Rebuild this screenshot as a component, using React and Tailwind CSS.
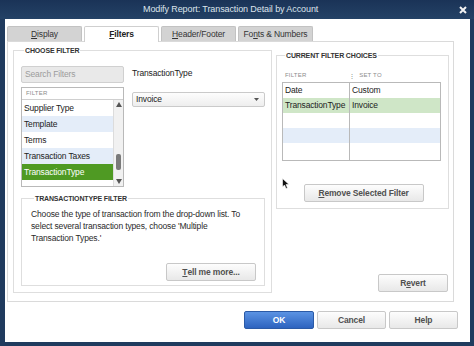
const listRows = [
  { label: 'Supplier Type', tone: '' },
  { label: 'Template', tone: 'bg-[#e4edf9]' },
  { label: 'Terms', tone: '' },
  { label: 'Transaction Taxes', tone: 'bg-[#e4edf9]' },
  { label: 'TransactionType', tone: 'bg-[#4f9a23] text-white' },
];

const choiceRows = [
  { filter: 'Date', value: 'Custom', tone: '' },
  { filter: 'TransactionType', value: 'Invoice', tone: 'bg-[#cfe6c7]' },
  { filter: '', value: '', tone: '' },
  { filter: '', value: '', tone: 'bg-[#e4edf9]' },
  { filter: '', value: '', tone: '' },
];

function Btn({ children, className = '' }) {
  return (
    <div
      className={`flex items-center justify-center h-[18px] border border-[#c8c8c8] rounded-[2px] bg-linear-to-b from-[#fdfdfd] to-[#e8e8e8] text-[8.5px] font-bold text-[#505050] ${className}`}
    >
      {children}
    </div>
  );
}

function Tab({ children, active }) {
  if (active) {
    return (
      <div className="w-[75px] h-[16px] flex items-center justify-center bg-white border border-b-0 border-[#cfcfcf] rounded-t-[2px] text-[8.5px] font-bold text-[#222]">
        {children}
      </div>
    );
  }
  return (
    <div className="w-[75px] h-[15px] flex items-center justify-center bg-[#d3d3d3] border border-b-0 border-[#c2c2c2] rounded-t-[2px] text-[8.5px] text-[#333]">
      {children}
    </div>
  );
}

export default function App() {
  return (
    <div className="w-[474px] h-[346px] flex flex-col bg-[#203b5e] pl-[5px] pr-[4px] pb-[4px] font-['Liberation_Sans',Arial,sans-serif] text-[#222] tracking-[-0.15px]">
      {/* title bar */}
      <div className="h-[19px] -ml-[5px] -mr-[4px] flex items-center bg-linear-to-b from-[#1a3357] to-[#244266] pl-[143px] pr-[7px]">
        <span className="text-[9px] text-[#dde4ec] tracking-[-0.1px]">
          Modify Report: Transaction Detail by Account
        </span>
        <svg className="ml-auto" width="8" height="8" viewBox="0 0 8 8">
          <path d="M1 1L7 7M7 1L1 7" stroke="#f2f2f2" strokeWidth="2" />
        </svg>
      </div>

      <div className="flex-1 bg-white flex flex-col pt-[7px] pl-[2px]">
        {/* tabs */}
        <div className="flex items-start gap-[2px] h-[16px] -mb-px relative z-10">
          <Tab>
            <span className="underline">D</span>isplay
          </Tab>
          <Tab active>
            <span className="underline">F</span>ilters
          </Tab>
          <Tab>
            <span className="underline">H</span>eader/Footer
          </Tab>
          <Tab>
            Fo<span className="underline">n</span>ts &amp; Numbers
          </Tab>
        </div>

        {/* main box */}
        <div className="w-[447px] border border-[#dadada] flex gap-[4px] pl-[5px] pr-[3px] pt-[4px] pb-[8px]">
          {/* choose filter */}
          <fieldset className="w-[259px] border border-[#dedede] pl-[7px] pr-[6px] pb-[6px]">
            <legend className="ml-[3px] px-[1px] text-[7px] leading-[9px] font-bold text-[#333]">
              CHOOSE FILTER
            </legend>
            <div className="flex gap-[8px] pt-[11px]">
              <div className="w-[103px] flex flex-col gap-[4px]">
                <div className="h-[17px] flex items-center pl-[3px] bg-[#e9e9e9] border border-[#d0d0d0] rounded-[2px] text-[8.5px] text-[#9c9c9c]">
                  Search Filters
                </div>
                <div className="h-[100px] border border-[#b9b9b9] flex flex-col">
                  <div className="h-[12px] flex items-center pl-[4px] border-b border-[#cfcfcf] text-[6px] text-[#8c8c8c] tracking-[0.2px]">
                    FILTER
                  </div>
                  <div className="flex-1 flex overflow-hidden">
                    <div className="flex-1 flex flex-col">
                      {listRows.map((r) => (
                        <div
                          key={r.label}
                          className={`h-[16px] shrink-0 flex items-center pl-[2px] text-[8.5px] whitespace-nowrap ${r.tone}`}
                        >
                          {r.label}
                        </div>
                      ))}
                    </div>
                    <div className="w-[10px] bg-[#f1f1f1] border-l border-[#dcdcdc] flex flex-col items-center pt-[2px] pb-[2px]">
                      <svg width="6" height="5" viewBox="0 0 6 5">
                        <path d="M3 0L6 5H0Z" fill="#555" />
                      </svg>
                      <div className="mt-auto mb-[9px] w-[5px] h-[16px] rounded-[2px] bg-[#7a7a7a]" />
                      <svg width="6" height="5" viewBox="0 0 6 5">
                        <path d="M0 0H6L3 5Z" fill="#555" />
                      </svg>
                    </div>
                  </div>
                </div>
              </div>
              <div className="flex-1 flex flex-col">
                <div className="h-[12px] mt-[1px] flex items-center text-[8.5px] text-[#222]">
                  TransactionType
                </div>
                <div className="mt-[13px] h-[15px] flex items-center pl-[3px] pr-[5px] border border-[#cacaca] rounded-[2px] bg-linear-to-b from-[#fdfdfd] to-[#eeeeee] text-[8.5px]">
                  Invoice
                  <svg className="ml-auto" width="5" height="3" viewBox="0 0 5 3">
                    <path d="M0 0H5L2.5 3Z" fill="#555" />
                  </svg>
                </div>
              </div>
            </div>

            {/* transactiontype filter */}
            <fieldset className="mt-[7px] border border-[#dedede] pl-[9px] pr-[8px] pb-[4px]">
              <legend className="ml-[3px] px-[1px] text-[7px] leading-[9px] font-bold text-[#333]">
                TRANSACTIONTYPE FILTER
              </legend>
              <p className="pt-[5px] text-[8.5px] leading-[12px] text-[#2a2a2a] whitespace-nowrap">
                Choose the type of transaction from the drop-down list. To
                <br />
                select several transaction types, choose &apos;Multiple
                <br />
                Transaction Types.&apos;
              </p>
              <div className="flex justify-end mt-[19px]">
                <Btn className="w-[90px]">
                  <span className="underline">T</span>ell me more...
                </Btn>
              </div>
            </fieldset>
          </fieldset>

          {/* right column */}
          <div className="w-[173px] flex flex-col pt-[5px]">
            <fieldset className="relative border border-[#dedede] pl-[5px] pr-[7px] pb-[6px]">
              <legend className="ml-[3px] px-[1px] text-[7px] leading-[9px] font-bold text-[#333]">
                CURRENT FILTER CHOICES
              </legend>
              <div className="pt-[9px] h-[22px] flex items-center text-[6px] text-[#8c8c8c] tracking-[0.2px]">
                <span className="w-[67px] pl-[3px]">FILTER</span>
                <span className="text-[#777] leading-[6px]">⋮</span>
                <span className="pl-[4px]">SET TO</span>
              </div>
              <div className="h-[79px] border border-[#b9b9b9] flex flex-col overflow-hidden">
                {choiceRows.map((r, i) => (
                  <div key={i} className={`h-[15px] shrink-0 flex text-[8.5px] ${r.tone}`}>
                    <div className="w-[67px] pl-[2px] flex items-center border-r border-[#b9b9b9]">
                      {r.filter}
                    </div>
                    <div className="flex-1 pl-[2px] flex items-center">{r.value}</div>
                  </div>
                ))}
                <div className="flex-1 flex">
                  <div className="w-[67px] border-r border-[#b9b9b9]" />
                </div>
              </div>
              <svg className="absolute left-[5px] top-[118px]" width="8" height="11" viewBox="0 0 8 11">
                <path d="M0.5 0.5V9L2.5 7L4 10.5L5.5 10L4 6.5H7Z" fill="#111" stroke="#fff" strokeWidth="0.6" />
              </svg>
              <div className="flex justify-center mt-[23px] pl-[4px]">
                <Btn className="w-[120px]">
                  <span className="underline">R</span>emove Selected Filter
                </Btn>
              </div>
            </fieldset>
            <div className="mt-auto mb-[1px] flex justify-end pr-[1px]">
              <Btn className="w-[70px]">
                R<span className="underline">e</span>vert
              </Btn>
            </div>
          </div>
        </div>

        {/* dialog buttons */}
        <div className="flex justify-end gap-[3px] mt-[9px] pr-[12px]">
          <div className="w-[70px] h-[18px] flex items-center justify-center rounded-[2px] border border-[#2b5aa6] bg-linear-to-b from-[#5b93e3] to-[#2d63bf] text-[8.5px] font-bold text-white">
            OK
          </div>
          <Btn className="w-[69px]">Cancel</Btn>
          <Btn className="w-[69px]">Help</Btn>
        </div>
      </div>
    </div>
  );
}
